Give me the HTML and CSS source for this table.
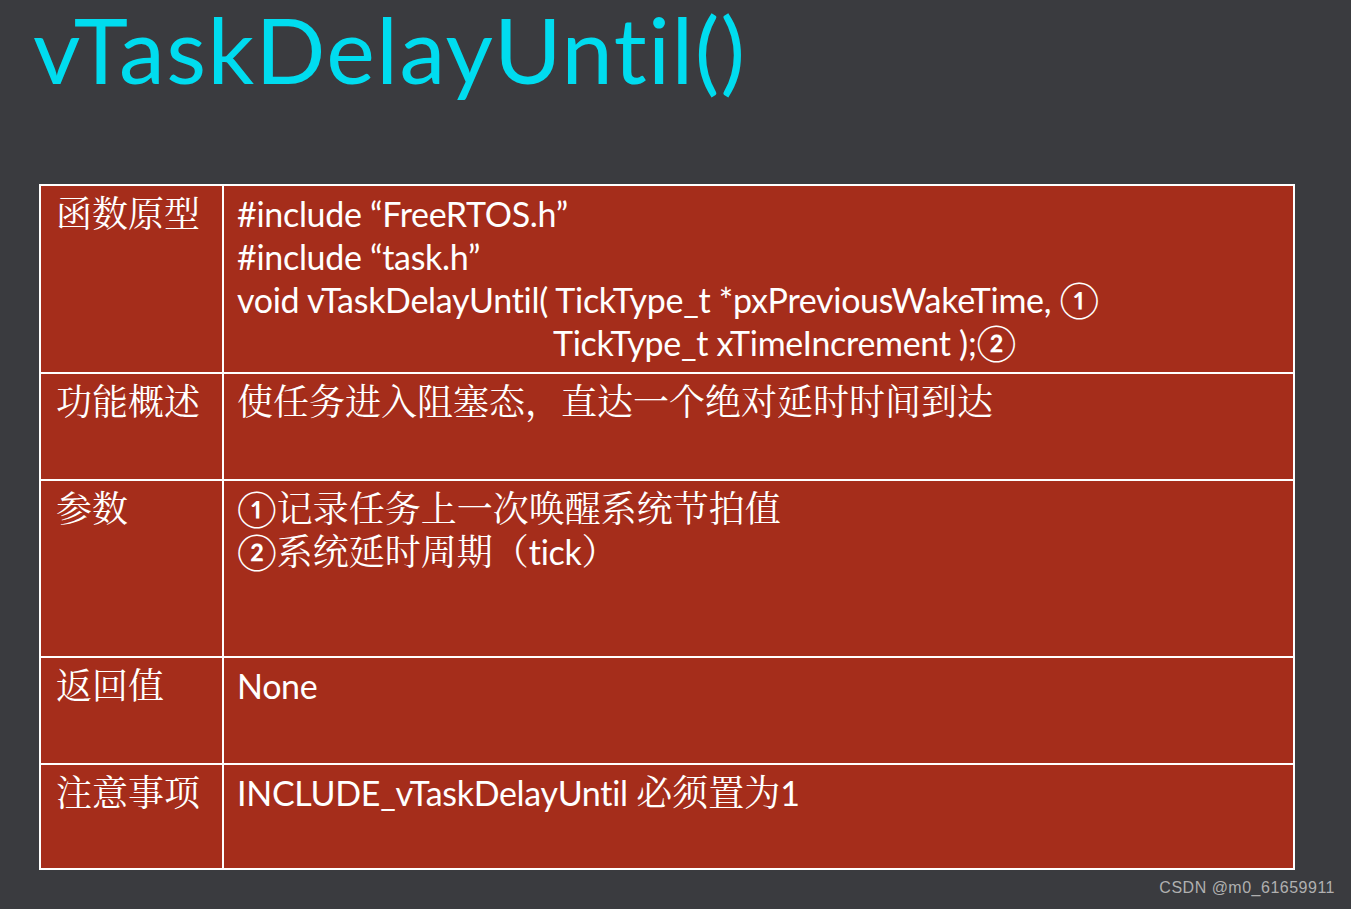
FILE: index.html
```html
<!DOCTYPE html>
<html lang="zh-CN">
<head>
    <meta charset="UTF-8">
    <title>vTaskDelayUntil()</title>
    <link rel="stylesheet" href="styles.css">
</head>
<body>
    <h1 class="title">vTaskDelayUntil()</h1>

    <div class="api-table">
        <div class="label">函数原型</div>
        <div class="value">
            #include “FreeRTOS.h”<br>
            #include “task.h”<br>
            void vTaskDelayUntil( TickType_t *pxPreviousWakeTime, <span class="cjk">①</span><br>
            <span class="indent">TickType_t xTimeIncrement );<span class="cjk">②</span></span>
        </div>

        <div class="label">功能概述</div>
        <div class="value cjk">使任务进入阻塞态，直达一个绝对延时时间到达</div>

        <div class="label">参数</div>
        <div class="value cjk">
            ①记录任务上一次唤醒系统节拍值<br>
            ②系统延时周期（<span class="latin">tick</span>）
        </div>

        <div class="label">返回值</div>
        <div class="value">None</div>

        <div class="label">注意事项</div>
        <div class="value">INCLUDE_vTaskDelayUntil <span class="cjk">必须置为</span>1</div>
    </div>

    <div class="watermark">CSDN @m0_61659911</div>
</body>
</html>
```

FILE: styles.css
```css
body {
    margin: 0;
    background: #3a3b3f;
    font-family: 'Lato', 'Noto Serif CJK SC', 'Noto Sans CJK SC', serif;
    font-variant-ligatures: none;
    height: 909px;
    overflow: hidden;
}
.title {
    margin: 0;
    padding: 0 0 0 33px;
    height: 184px;
    color: #00dcef;
    font-weight: normal;
    font-size: 92px;
    line-height: 98px;
    letter-spacing: 1.4px;
}
.api-table {
    display: grid;
    grid-template-columns: 181px 1069px;
    grid-template-rows: 186px 105px 175px 105px 103px;
    gap: 2px;
    width: 1252px;
    margin-left: 39px;
    padding: 2px;
    background: #ffffff;
}
.label,
.value {
    background: #a52d1b;
    color: #ffffff;
    line-height: 43px;
    padding-top: 6px;
}
.label {
    padding-left: 15px;
    font-size: 36px;
}
.value {
    padding-left: 13px;
    font-size: 34px;
    letter-spacing: -0.3px;
    white-space: nowrap;
}
.cjk {
    font-size: 36px;
    letter-spacing: 0;
}
.latin {
    font-size: 34px;
    letter-spacing: -0.3px;
}
.indent {
    padding-left: 316px;
}
.watermark {
    text-align: right;
    padding: 9px 16px 0 0;
    color: #b0b0b0;
    font-family: 'Liberation Sans', sans-serif;
    font-size: 16px;
    letter-spacing: 0.5px;
}
```
